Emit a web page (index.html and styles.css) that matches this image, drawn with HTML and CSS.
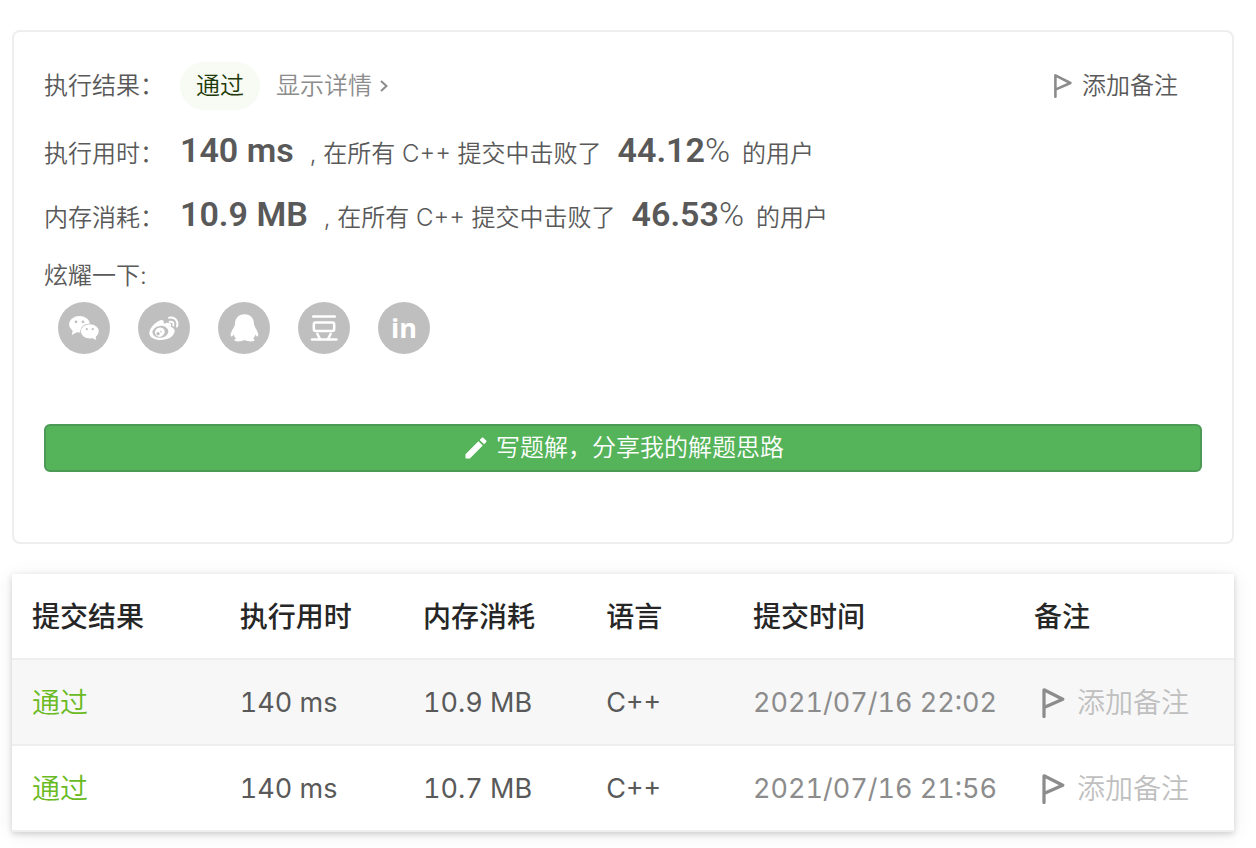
FILE: index.html
```
<!DOCTYPE html>
<html lang="zh-CN">
<head>
  <meta charset="UTF-8">
  <title>提交记录</title>
  <link rel="stylesheet" href="styles.css">
</head>
<body>
  <svg class="sprite" aria-hidden="true">
    <symbol id="flag" viewBox="0 0 18 24">
      <path d="M1.4 22.8V1.4L16.4 9 1.4 15.6" fill="none" stroke="currentColor" stroke-width="2.6" stroke-linecap="round" stroke-linejoin="round"/>
    </symbol>
  </svg>

  <section class="result-panel">
    <div class="status-row">
      <span class="label">执行结果：</span>
      <span class="badge">通过</span>
      <a class="detail-link" href="#">显示详情
        <svg width="8" height="14" viewBox="0 0 8 14" aria-hidden="true"><path d="M1 2l5.5 5L1 12" fill="none" stroke="currentColor" stroke-width="2"/></svg>
      </a>
      <button class="note-button" type="button"><svg width="18" height="24" aria-hidden="true"><use href="#flag"/></svg>添加备注</button>
    </div>

    <div class="stat-row">
      <span class="label">执行用时：</span>
      <strong class="value">140 ms</strong>
      <span class="rank">, 在所有 C++ 提交中击败了</span>
      <span class="percent"><strong>44.12</strong>%</span>
      <span>的用户</span>
    </div>
    <div class="stat-row">
      <span class="label">内存消耗：</span>
      <strong class="value">10.9 MB</strong>
      <span class="rank">, 在所有 C++ 提交中击败了</span>
      <span class="percent"><strong>46.53</strong>%</span>
      <span>的用户</span>
    </div>

    <p class="share-title">炫耀一下:</p>
    <div class="share-list">
      <button type="button" aria-label="微信">
        <svg viewBox="0 0 52 52">
          <ellipse cx="21.5" cy="22.3" rx="10.5" ry="8.3" fill="#fff"/>
          <path d="M15 27l-1.2 6 5.5-3z" fill="#fff"/>
          <ellipse cx="31.8" cy="29.4" rx="9.7" ry="8" fill="#bfbfbf"/>
          <ellipse cx="31.8" cy="29.4" rx="8.9" ry="7.2" fill="#fff"/>
          <path d="M33 35.5l5.2 2.5-1-5z" fill="#fff"/>
          <g fill="#bfbfbf"><circle cx="18" cy="19.8" r="1.4"/><circle cx="25" cy="19.8" r="1.4"/><circle cx="28.8" cy="27.2" r="1.1"/><circle cx="34.8" cy="27.2" r="1.1"/></g>
        </svg>
      </button>
      <button type="button" aria-label="微博">
        <svg viewBox="0 0 52 52">
          <path d="M22.6 18.2c2-.5 3.5.4 3.2 2.4-.1.9-.1 1.3.6 1 3.5-1.5 7.6-1.2 6.5 2.4-.2.7.1 1 .8 1.3 4.2 1.7 3.6 5.8.3 8.9-6.6 6-21.9 4.7-22.7-2.7C10.9 26.5 17.7 19.4 22.6 18.2z" fill="#fff"/>
          <ellipse cx="22.4" cy="29.8" rx="8" ry="5.9" fill="#bfbfbf" transform="rotate(-8 22.4 29.8)"/>
          <ellipse cx="21.8" cy="30.2" rx="5" ry="4.5" fill="#fff" transform="rotate(-25 21.8 30.2)"/>
          <circle cx="20" cy="31.7" r="1.7" fill="#bfbfbf"/><circle cx="23" cy="29.7" r=".8" fill="#bfbfbf"/>
          <g fill="none" stroke="#fff" stroke-width="2" stroke-linecap="round"><path d="M31 15.8c6-1.2 9.6 3.3 8 8.7"/><path d="M31.8 19.7c2.7-.4 4.3 1.3 3.5 3.9"/></g>
        </svg>
      </button>
      <button type="button" aria-label="QQ">
        <svg viewBox="0 0 52 52">
          <path d="M26.5 12.2c-6.2 0-9.7 4.2-9.5 10.3l-1.5 3.5c-2.1 3.2-3.7 7.2-2.4 8.4.7.5 1.8-.8 2.5-2 .5 1.7 1.3 3 2.3 4-3 1.7-1.5 3 2 3 2.8 0 5.2-.5 6.6-1.3 1.4.8 3.8 1.3 6.5 1.3 3.6 0 5-1.3 2.2-3 1-1 1.8-2.3 2.3-4 .7 1.2 1.7 2.5 2.3 2 1.3-1.2-.2-5.2-2.3-8.4L36 22.5c.2-6.1-3.3-10.3-9.5-10.3z" fill="#fff"/>
        </svg>
      </button>
      <button type="button" aria-label="豆瓣">
        <svg viewBox="0 0 52 52">
          <g fill="none" stroke="#fff" stroke-width="2.5" stroke-linecap="round"><path d="M15.2 14.4h21.6M14 37.4h24.4M19.3 31.8l2.4 4.8M32.7 31.8l-2.4 4.8"/><rect x="15.8" y="20.4" width="20.4" height="8.6" rx="2"/></g>
        </svg>
      </button>
      <button class="linkedin" type="button" aria-label="LinkedIn">in</button>
    </div>

    <button class="write-button" type="button">
      <svg width="28" height="28" viewBox="0 0 24 24" aria-hidden="true"><path d="M3 17.25V21h3.75L17.81 9.94l-3.75-3.75L3 17.25zM20.71 7.04a1 1 0 0 0 0-1.41l-2.34-2.34a1 1 0 0 0-1.41 0l-1.83 1.83 3.75 3.75 1.83-1.83z" fill="currentColor"/></svg>
      写题解，分享我的解题思路
    </button>
  </section>

  <table class="submissions">
    <thead>
      <tr>
        <th class="col-result">提交结果</th>
        <th class="col-runtime">执行用时</th>
        <th class="col-memory">内存消耗</th>
        <th class="col-lang">语言</th>
        <th class="col-time">提交时间</th>
        <th class="col-note">备注</th>
      </tr>
    </thead>
    <tbody>
      <tr>
        <td><a class="accepted" href="#">通过</a></td>
        <td>140 ms</td>
        <td>10.9 MB</td>
        <td>C++</td>
        <td class="time">2021/07/16 22:02</td>
        <td><button class="row-note" type="button"><svg width="23" height="30" aria-hidden="true"><use href="#flag"/></svg>添加备注</button></td>
      </tr>
      <tr>
        <td><a class="accepted" href="#">通过</a></td>
        <td>140 ms</td>
        <td>10.7 MB</td>
        <td>C++</td>
        <td class="time">2021/07/16 21:56</td>
        <td><button class="row-note" type="button"><svg width="23" height="30" aria-hidden="true"><use href="#flag"/></svg>添加备注</button></td>
      </tr>
    </tbody>
  </table>
</body>
</html>
```
FILE: styles.css
```
* {
  margin: 0;
  padding: 0;
  box-sizing: border-box;
}

body {
  padding: 30px 22px 16px 12px;
  background: #fff;
  color: #595959;
  font-family: Inter, "Noto Sans CJK SC", sans-serif;
  font-size: 24px;
  font-weight: 350;
  line-height: 32px;
}

button {
  border: none;
  background: none;
  color: inherit;
  font: inherit;
  cursor: pointer;
}

a {
  text-decoration: none;
}

.sprite {
  display: none;
}

.result-panel {
  padding: 30px 30px 70px;
  border: 2px solid #eee;
  border-radius: 8px;
}

.status-row {
  display: flex;
  align-items: center;
  height: 48px;
  margin-bottom: 12px;
}

.label {
  flex: none;
  width: 136px;
}

.badge {
  padding: 8px 16px;
  border-radius: 24px;
  background: #f7fbf3;
  color: #1f3a0a;
}

.detail-link {
  display: flex;
  align-items: center;
  gap: 8px;
  margin-left: 16px;
  color: #8c8c8c;
}

.note-button {
  display: flex;
  align-items: center;
  gap: 10px;
  margin-left: auto;
  padding-right: 24px;
}

.note-button svg,
.row-note svg {
  color: #8c8c8c;
}

.stat-row {
  display: flex;
  align-items: baseline;
  height: 64px;
  padding-top: 8px;
}

.value,
.percent {
  font-family: Roboto, sans-serif;
  font-size: 34px;
  line-height: 40px;
}

.value,
.percent strong {
  font-weight: 600;
}

.rank {
  margin: 0 16px;
}

.percent {
  margin-right: 12px;
}

.share-title {
  padding: 10px 0 8px;
}

.share-list {
  display: flex;
  gap: 28px;
  margin: 2px 14px 70px;
}

.share-list button {
  width: 52px;
  height: 52px;
  border-radius: 50%;
  background: #bfbfbf;
}

.share-list svg {
  display: block;
}

.share-list .linkedin {
  color: #fff;
  font-family: "Open Sans", sans-serif;
  font-size: 27px;
  font-weight: 700;
}

.write-button {
  display: flex;
  align-items: center;
  justify-content: center;
  gap: 6px;
  width: 100%;
  height: 48px;
  border: 2px solid #4c9a55;
  border-radius: 6px;
  background: #55b35a;
  color: #fff;
}

.submissions {
  width: 100%;
  margin-top: 30px;
  table-layout: fixed;
  border-collapse: separate;
  border-spacing: 0;
  background: #fff;
  box-shadow: 0 2px 6px rgba(0, 0, 0, 0.16), 0 2px 20px rgba(0, 0, 0, 0.07);
}

.submissions th,
.submissions td {
  height: 86px;
  padding: 2px 0 0 20px;
  border-bottom: 2px solid #eee;
  text-align: left;
  white-space: nowrap;
}

.submissions th,
.accepted,
.row-note {
  font-size: 28px;
}

.submissions th {
  color: #262626;
  font-weight: 500;
}

.submissions td {
  font-size: 27px;
  font-weight: 400;
  font-variant-numeric: tabular-nums;
}

.submissions tbody tr:nth-child(odd) {
  background: #f7f7f7;
}

.col-result {
  width: 17%;
}

.col-runtime,
.col-memory {
  width: 15%;
}

.col-lang {
  width: 12%;
}

.col-time {
  width: 23%;
}

.col-note {
  width: 18%;
}

.accepted {
  color: #6aba23;
  font-weight: 350;
}

.submissions .time {
  color: #8c8c8c;
}

.row-note {
  display: flex;
  align-items: center;
  gap: 12px;
  padding-left: 8px;
  color: #bfbfbf;
  font-weight: 350;
}
```
